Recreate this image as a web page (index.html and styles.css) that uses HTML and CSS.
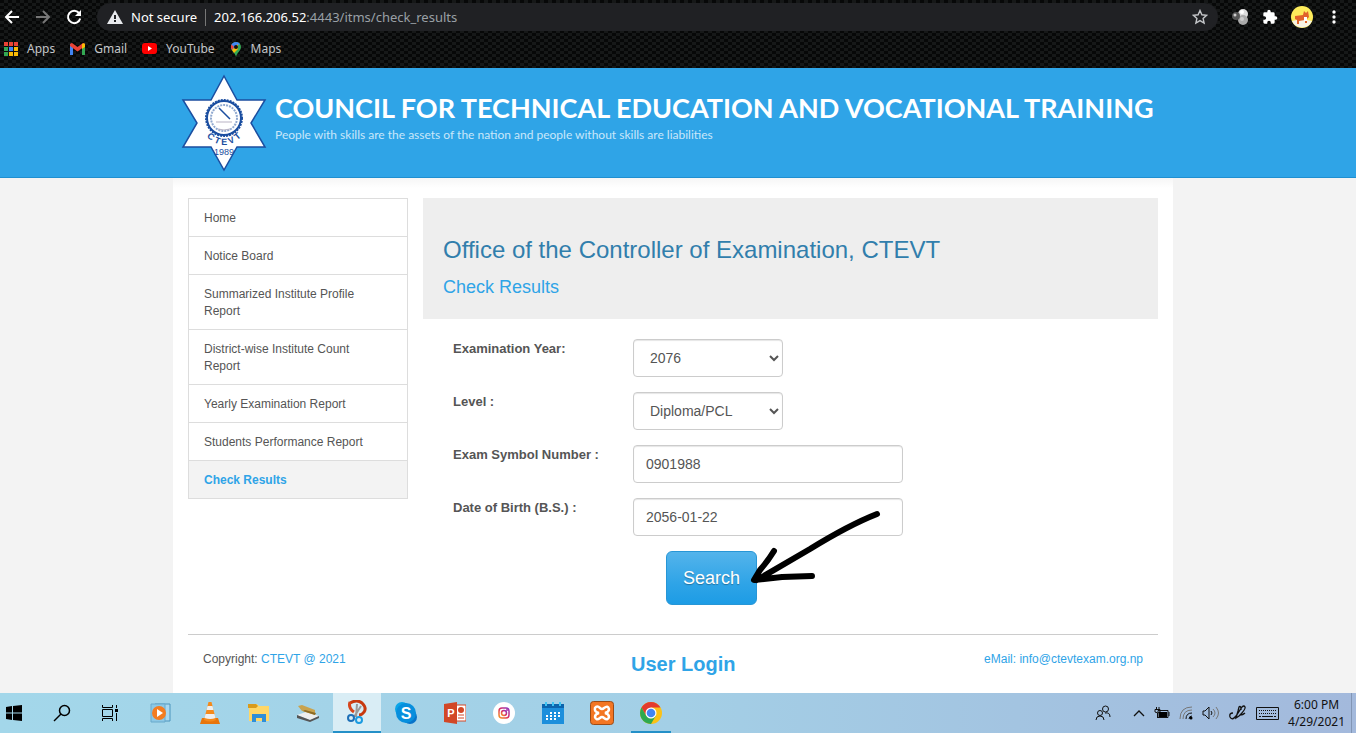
FILE: index.html
```
<!DOCTYPE html>
<html lang="en">
<head>
	<meta charset="utf-8">
	<title>CTEVT - Check Results</title>
	<link rel="stylesheet" href="styles.css">
</head>
<body>
	<!-- browser bar -->
	<div class="browser">
		<div class="toolbar">
			<button class="tool" aria-label="Back"><svg width="16" height="16" viewBox="0 0 16 16"><path d="M15 8H2M8 2L2 8l6 6" fill="none" stroke="#fff" stroke-width="2"/></svg></button>
			<button class="tool" aria-label="Forward"><svg width="16" height="16" viewBox="0 0 16 16"><path d="M1 8h13M8 2l6 6-6 6" fill="none" stroke="#777" stroke-width="2"/></svg></button>
			<button class="tool" aria-label="Reload"><svg width="16" height="16" viewBox="0 0 16 16"><path d="M13 4A6.200 6.200 0 1 0 14.200 9.500" fill="none" stroke="#fff" stroke-width="2"/><path d="M15 1v6H9z" fill="#fff"/></svg></button>
			<div class="address">
				<svg width="16" height="14" viewBox="0 0 16 14"><path d="M8 0l8 14H0z" fill="#e8eaed"/><path d="M8 5v4M8 10v2" stroke="#202124" stroke-width="2"/></svg>
				<span class="secure">Not secure</span>
				<span class="url">202.166.206.52<span class="path">:4443/itms/check_results</span></span>
				<svg class="star" width="16" height="16" viewBox="0 0 16 16"><path d="M8 1.500l1.900 4.300 4.700.5-3.500 3.100 1 4.600L8 11.600 3.900 14l1-4.600L1.400 6.300l4.700-.5z" fill="none" stroke="#c4c6c9" stroke-width="1.400"/></svg>
			</div>
			<svg width="18" height="18" viewBox="0 0 18 18"><circle cx="12" cy="6" r="5" fill="#ddd"/><circle cx="12" cy="12" r="5" fill="#aaa"/><circle cx="5" cy="8" r="4" fill="#555"/><circle cx="4" cy="7" r="1.500" fill="#ccc"/><circle cx="11" cy="11" r="2" fill="#ccc"/><circle cx="11" cy="4" r="2" fill="#fff"/></svg>
			<svg width="16" height="16" viewBox="0 0 24 24"><path d="M20.500 11H19V7a2 2 0 0 0-2-2h-4V3.500a2.500 2.500 0 0 0-5 0V5H4a2 2 0 0 0-2 2v3.800h1.500a2.700 2.700 0 0 1 0 5.400H2V20a2 2 0 0 0 2 2h3.800v-1.500a2.700 2.700 0 0 1 5.400 0V22H17a2 2 0 0 0 2-2v-4h1.500a2.500 2.500 0 0 0 0-5z" fill="#fff"/></svg>
			<svg width="22" height="22" viewBox="0 0 22 22"><circle cx="11" cy="11" r="11" fill="#fdec5b"/><path d="M1 15q10-3 20 0a11 11 0 0 1-20 0z" fill="#f7f3e4"/><path d="M4 10l8-1 1-4 2 2 2-2 1 6-2 2v4h-2v-3l-6 1v3H6v-4L4 13z" fill="#e0642a"/><path d="M13 11h3v4h-3z" fill="#fff"/></svg>
			<svg class="dots" width="4" height="14" viewBox="0 0 4 14"><circle cx="2" cy="2" r="1.700" fill="#fff"/><circle cx="2" cy="7" r="1.700" fill="#fff"/><circle cx="2" cy="12" r="1.700" fill="#fff"/></svg>
		</div>
		<div class="bookmarks">
			<a href="#"><svg width="14" height="14" viewBox="0 0 14 14"><path d="M0 0h4v4H0zM5 0h4v4H5zM10 0h4v4h-4z" fill="#ea4335"/><path d="M0 5h4v4H0zM0 10h4v4H0z" fill="#34a853"/><path d="M5 5h4v4H5z" fill="#4285f4"/><path d="M10 5h4v4h-4zM5 10h4v4H5zM10 10h4v4h-4z" fill="#fbbc05"/></svg>Apps</a>
			<a href="#"><svg width="15" height="12" viewBox="0 0 15 12"><path d="M0 1h3v11H0z" fill="#4285f4"/><path d="M12 1h3v11h-3z" fill="#34a853"/><path d="M0 2Q0 0 2 0l5.500 4L13 0q2 0 2 2v1L7.500 8.500 0 3z" fill="#ea4335"/><path d="M12 1q3-2 3 1v2l-3 2z" fill="#fbbc04"/></svg>Gmail</a>
			<a href="#"><svg width="15" height="11" viewBox="0 0 15 11"><rect width="15" height="11" rx="3" fill="#f00"/><path d="M6 3l4 2.500L6 8z" fill="#fff"/></svg>YouTube</a>
			<a href="#"><svg width="12" height="16" viewBox="0 0 12 16"><path d="M6 16C5 11 1 10 1 6a5 5 0 0 1 10 0c0 4-4 5-5 10z" fill="#34a853"/><path d="M1 6a5 5 0 0 1 9-3L2 9Q1 7 1 6z" fill="#4285f4"/><path d="M1.500 3.500L4 6 2 9Q0 6 1.500 3.500z" fill="#ea4335"/><path d="M2 9l6-6v5l-4 4z" fill="#fbbc04"/><circle cx="6" cy="6" r="2" fill="#111"/></svg>Maps</a>
		</div>
	</div>

	<header class="banner">
		<div class="container brand">
			<svg width="86" height="98" viewBox="0 0 86 98">
				<path d="M43 2l13 24h28L70 49l14 24H56L43 96 30 73H2l14-24L2 26h28z" fill="#fff" stroke="#1b4ea0" stroke-width="1.500"/>
				<circle cx="43" cy="44" r="17" fill="#fff" stroke="#1b4ea0" stroke-width="2"/>
				<circle cx="43" cy="44" r="18" fill="none" stroke="#1b4ea0" stroke-width="2" stroke-dasharray="2 1"/>
				<circle cx="43" cy="44" r="13" fill="none" stroke="#8fa8cf" stroke-width="2" stroke-dasharray="2 1"/>
				<path d="M38 34l11 11" stroke="#1b4ea0" stroke-width="1.500"/>
				<path d="M35 48h16M37 55q6 2 12 0" stroke="#b9b3c4" fill="none"/>
				<path id="arc" d="M23 60Q43 82 63 60" fill="none"/>
				<text class="logo-name"><textPath href="#arc" startOffset="50%" text-anchor="middle">C T E V T</textPath></text>
				<text class="logo-year" x="43" y="81" text-anchor="middle">1989</text>
			</svg>
			<div>
				<h1>COUNCIL FOR TECHNICAL EDUCATION AND VOCATIONAL TRAINING</h1>
				<p>People with skills are the assets of the nation and people without skills are liabilities</p>
			</div>
		</div>
	</header>

	<div class="page">
		<div class="container content">
			<div class="columns">
				<nav class="menu">
					<a href="#">Home</a>
					<a href="#">Notice Board</a>
					<a href="#">Summarized Institute Profile Report</a>
					<a href="#">District-wise Institute Count Report</a>
					<a href="#">Yearly Examination Report</a>
					<a href="#">Students Performance Report</a>
					<a href="#" class="active">Check Results</a>
				</nav>
				<main>
					<div class="heading">
						<h2>Office of the Controller of Examination, CTEVT</h2>
						<h3>Check Results</h3>
					</div>
					<form>
						<label for="year">Examination Year:</label>
						<select id="year"><option>2076</option></select>
						<label for="level">Level :</label>
						<select id="level"><option>Diploma/PCL</option></select>
						<label for="symbol">Exam Symbol Number :</label>
						<input type="text" id="symbol" value="0901988">
						<label for="dob">Date of Birth (B.S.) :</label>
						<input type="text" id="dob" value="2056-01-22">
						<div class="submit">
							<button type="submit">Search</button>
							<!-- hand drawn arrow -->
							<svg class="arrow" width="132" height="78" viewBox="0 0 132 78"><path d="M127 5Q99 16 60 40L7 71M24 42Q18 52 10 61L4 71L32 68L62 67" fill="none" stroke="#000" stroke-width="6" stroke-linecap="round" stroke-linejoin="round"/></svg>
						</div>
					</form>
				</main>
			</div>
			<footer>
				<span>Copyright: <a href="#">CTEVT @ 2021</a></span>
				<a href="#" class="login">User Login</a>
				<a href="#">eMail: info@ctevtexam.org.np</a>
			</footer>
		</div>
	</div>

	<!-- windows taskbar -->
	<div class="taskbar">
		<button class="start" aria-label="Start"><svg width="16" height="16" viewBox="0 0 16 16"><path d="M0 2l6-1v6.500H0zM7 1l9-1v7.500H7zM0 8.500h6V15l-6-1zM7 8.500h9V16l-9-1z"/></svg></button>
		<button aria-label="Search"><svg width="18" height="18" viewBox="0 0 18 18"><circle cx="11.500" cy="6.500" r="5" fill="none" stroke="#000" stroke-width="1.500"/><path d="M8 10l-7 7" stroke="#000" stroke-width="1.500"/></svg></button>
		<button aria-label="Task View"><svg width="18" height="16" viewBox="0 0 18 16"><path d="M1.500 4.500h10v7h-10zM1.500 0v2.500h10V0M1.500 16v-2.500h10V16M15.500 0v3M15.500 8v8" fill="none" stroke="#000"/><path d="M14 4h3v3h-3z"/></svg></button>
		<div class="apps">
			<button aria-label="Media Player"><svg width="22" height="20" viewBox="0 0 22 20"><path d="M5 1h15v17H5z" fill="#a9d8f0" stroke="#4d95bd"/><path d="M1 1h14v18H1z" fill="#8cc8e6" stroke="#68a9cb"/><circle cx="9" cy="10" r="7" fill="#f47c20"/><path d="M7 6l6 4-6 4z" fill="#fff"/></svg></button>
			<button aria-label="VLC"><svg width="20" height="22" viewBox="0 0 20 22"><path d="M2 16h16l2 6H0z" fill="#e8750a"/><path d="M8.500 0h3L16 18q-6 3-12 0z" fill="#f58a1a"/><path d="M7.500 4h5l1 4h-7zM5.500 12h9l1 4q-5 2-11 0z" fill="#eee"/></svg></button>
			<button aria-label="Explorer"><svg width="22" height="18" viewBox="0 0 22 18"><path d="M1 0h8l2 2h10v15H1z" fill="#ffd767"/><path d="M0 0h8l2 2-2 2H0z" fill="#d99b1c"/><path d="M4 18v-8h14v8h-4v-4H8v4z" fill="#2f8fd8"/></svg></button>
			<button aria-label="Scanner"><svg width="22" height="18" viewBox="0 0 22 18"><path d="M0 11l9-3 13 4-9 4z" fill="#eee"/><path d="M0 11l13 5v2L0 14zM13 16l9-4v2l-9 4z" fill="#555"/><path d="M1 2l4-1 13 5v5L5 7z" fill="#c9a34e"/><path d="M6 7l12 4 1-2L8 6z" fill="#8d6b25"/></svg></button>
			<button class="current" aria-label="Snipping Tool"><svg width="20" height="24" viewBox="0 0 20 24"><path d="M3 3Q10-1 15 3q5 5 2 9-2 3-5 3" fill="none" stroke="#c8390f" stroke-width="3"/><path d="M3 2q-2 6 4 10" fill="none" stroke="#d7451b" stroke-width="3"/><path d="M10 4L9 17M14 6L7 17" stroke="#999" stroke-width="2"/><circle cx="4" cy="18" r="3" fill="none" stroke="#1d70b8" stroke-width="2"/><circle cx="12" cy="20" r="3" fill="none" stroke="#1b9be0" stroke-width="2"/></svg></button>
			<button aria-label="Skype"><svg width="22" height="22" viewBox="0 0 22 22"><circle cx="7" cy="7" r="7" fill="#0aa5e8"/><circle cx="15" cy="15" r="7" fill="#0873c9"/><circle cx="11" cy="11" r="10" fill="#078fdd"/><text class="skype" x="11" y="17" text-anchor="middle">S</text></svg></button>
			<button aria-label="PowerPoint"><svg width="22" height="22" viewBox="0 0 22 22"><path d="M12 3h10v16H12z" fill="#fff" stroke="#d24726"/><path d="M14 13h6M14 16h6" stroke="#d24726"/><circle cx="17" cy="8" r="3" fill="#d24726"/><path d="M0 2l13-2v22L0 20z" fill="#d24726"/><text class="ppt" x="7" y="15" text-anchor="middle">P</text></svg></button>
			<button aria-label="Instagram"><svg width="22" height="22" viewBox="0 0 22 22"><defs><linearGradient id="insta" x1="0" y1="1" x2="1" y2="0"><stop offset="0" stop-color="#f59b20"/><stop offset=".5" stop-color="#dc2c63"/><stop offset="1" stop-color="#8838c8"/></linearGradient></defs><circle cx="11" cy="11" r="11" fill="#fff"/><rect x="6" y="6" width="10" height="10" rx="3" fill="none" stroke="url(#insta)" stroke-width="1.500"/><circle cx="11" cy="11" r="2.500" fill="none" stroke="url(#insta)" stroke-width="1.500"/><circle cx="14" cy="8" r="1" fill="#a833a5"/></svg></button>
			<button aria-label="Calendar"><svg width="22" height="22" viewBox="0 0 22 22"><path d="M0 2h22v20H0z" fill="#1c8fdc"/><path d="M0 2h22v4H0z" fill="#0c65ad"/><path d="M4 0v4M11 0v4M18 0v4" stroke="#3fc4f2" stroke-width="2"/><path d="M8 11h11M4 14h15M4 17h11" stroke="#fff" stroke-width="2" stroke-dasharray="2 2"/></svg></button>
			<button aria-label="XAMPP"><svg width="24" height="24" viewBox="0 0 24 24"><rect x=".5" y=".5" width="23" height="23" rx="3" fill="#f37623" stroke="#9b4b16"/><path d="M9 12q-5-1-4-5 2-3 5 0 2 2 4 0 4-3 5 1 0 3-4 4 4 1 4 4-1 4-5 1-2-2-4 0-4 3-5-1 0-3 4-4z" fill="none" stroke="#fff" stroke-width="2.500"/></svg></button>
			<button class="running" aria-label="Chrome"><svg width="22" height="22" viewBox="0 0 22 22"><circle cx="11" cy="11" r="11" fill="#fbc116"/><path d="M1.500 5.500a11 11 0 0 1 19 0H11L6.200 13.800z" fill="#e33b2e"/><path d="M1.500 5.500L6.200 13.800 11 16.500 15.800 13.800 11 22A11 11 0 0 1 1.500 5.500z" fill="#2da94f"/><circle cx="11" cy="11" r="5.500" fill="#fff"/><circle cx="11" cy="11" r="4.300" fill="#4285f4"/></svg></button>
		</div>
		<div class="tray">
			<svg class="people" width="16" height="16" viewBox="0 0 16 16"><circle cx="10.500" cy="4" r="3" fill="none" stroke="#111"/><circle cx="5" cy="8" r="2.500" fill="none" stroke="#111"/><path d="M1 15q0-4 4-4t4 4M10 8q5-1 5 4" fill="none" stroke="#111"/></svg>
			<svg width="12" height="7" viewBox="0 0 12 7"><path d="M1 6l5-5 5 5" fill="none" stroke="#111" stroke-width="1.300"/></svg>
			<svg width="16" height="12" viewBox="0 0 16 12"><path d="M4 3.500h10v7H4zM15 5v4M1 2.500h5V5q-2 2-5 0zM2.500 0v2M5 0v2M3.500 6v5" fill="none" stroke="#111"/><path d="M5 5h8v5H5z"/></svg>
			<svg width="14" height="14" viewBox="0 0 14 14"><path d="M1 13Q1 1 13 1M4 13q0-9 9-9" fill="none" stroke="#777"/><path d="M7 13q0-6 6-6M10 13q0-3 3-3" fill="none" stroke="#111"/><circle cx="12" cy="12" r="1.500"/></svg>
			<svg width="18" height="14" viewBox="0 0 18 14"><path d="M1 5h2l4-4v12L3 9H1z" fill="none" stroke="#111"/><path d="M9 5q2 2 0 4" fill="none" stroke="#111"/><path d="M11 3q4 4 0 8M14 1q5 6 0 12" fill="none" stroke="#777"/></svg>
			<svg width="18" height="16" viewBox="0 0 18 16"><path d="M4 8q-4 0-3 4 2 4 6-1l6-9q2-2 3 0t-6 9l-3 2 2-7 1-4q2-2 2 3M11 10q3 0 5-2" fill="none" stroke="#111" stroke-width="1.300"/></svg>
			<svg width="23" height="13" viewBox="0 0 23 13"><path d="M.5.500h22v12H.5z" fill="none" stroke="#111"/><path d="M3 3.500h17M3 6.500h17" stroke="#111" stroke-dasharray="1 1"/><path d="M3 9.500h2M6 9.500h11M18 9.500h2" stroke="#111"/></svg>
			<div class="clock">6:00 PM<br>4/29/2021</div>
		</div>
	</div>
</body>
</html>
```
FILE: styles.css
```
* {
  box-sizing: border-box;
}

body {
  display: flex;
  flex-direction: column;
  min-height: 100vh;
  margin: 0;
  background-color: #f3f3f3;
  color: #555;
  font-family: "Liberation Sans", Arial, sans-serif;
  font-size: 12px;
  line-height: 17px;
}

a {
  color: #2fa4e7;
  text-decoration: none;
}

button {
  padding: 0;
  border: none;
  background: none;
}

svg {
  display: block;
  flex-shrink: 0;
}

/* Browser bar */
.browser {
  height: 68px;
  padding-top: 3px;
  background-color: #0b0c0c;
  background-image: conic-gradient(#161818 25%, #070808 0 50%, #161818 0 75%, #070808 0);
  background-size: 8px 6px;
  font-family: "Noto Sans", sans-serif;
}

.toolbar {
  display: flex;
  align-items: center;
  gap: 13px;
  padding: 0 20px 0 4px;
}

.tool {
  width: 18px;
}

.dots {
  margin-left: 6px;
}

.address {
  display: flex;
  flex: 1;
  align-items: center;
  height: 28px;
  padding: 0 10px;
  border-radius: 14px;
  background-color: #202124;
  color: #fff;
  font-size: 13px;
}

.secure {
  margin: 0 8px;
  padding-right: 8px;
  border-right: 1px solid #777;
}

.path {
  color: #9aa0a6;
}

.star {
  margin-left: auto;
}

.bookmarks {
  display: flex;
  gap: 15px;
  padding: 9px 4px;
}

.bookmarks a {
  display: flex;
  align-items: center;
  gap: 9px;
  color: #c4c6c9;
}

/* Site header */
.banner {
  height: 110px;
  padding-right: 10px;
  background-color: #2fa4e7;
  border-bottom: 1px solid #1f8fd0;
}

.container {
  max-width: 1000px;
  margin: 0 auto;
}

.brand {
  display: flex;
  gap: 8px;
  padding: 6px 8px;
  color: #fff;
  font-family: Lato, sans-serif;
  white-space: nowrap;
}

.brand h1 {
  margin: 16px 0 0;
  font-size: 27px;
  line-height: 36px;
}

.brand p {
  margin: 0;
  color: #c9e7fa;
}

.logo-name {
  fill: #1b4ea0;
  font: bold 9px "Liberation Sans", sans-serif;
}

.logo-year {
  fill: #1b4ea0;
  font: 9px "Liberation Sans", sans-serif;
}

/* Page content */
.page {
  display: flex;
  flex: 1;
  padding-right: 10px;
}

.content {
  flex: 1;
  padding: 20px 15px 0;
  background: linear-gradient(#f6f6f6, #fff 10px);
}

.columns {
  display: flex;
  align-items: flex-start;
  gap: 15px;
}

.menu {
  width: 220px;
  border: 1px solid #ddd;
}

.menu a {
  display: block;
  padding: 11px 30px 9px 15px;
  color: #555;
}

.menu a + a {
  border-top: 1px solid #ddd;
}

.menu .active {
  background-color: #f3f3f3;
  color: #2fa4e7;
  font-weight: bold;
}

main {
  flex: 1;
}

.heading {
  height: 121px;
  padding: 36px 20px 0;
  background-color: #eee;
}

.heading h2 {
  margin: 0 0 10px;
  color: #317eac;
  font-size: 24px;
  font-weight: normal;
  line-height: 32px;
}

.heading h3 {
  margin: 0;
  color: #2fa4e7;
  font-size: 18px;
  font-weight: normal;
  line-height: 22px;
}

/* Search form */
form {
  display: grid;
  grid-template-columns: 180px 270px;
  row-gap: 15px;
  padding: 20px 30px 29px;
}

label {
  font-size: 13px;
  font-weight: bold;
  line-height: 20px;
}

input,
select {
  height: 38px;
  padding: 0 12px;
  border: 1px solid #ccc;
  border-radius: 4px;
  background-color: #fff;
  box-shadow: inset 0 1px 1px rgba(0, 0, 0, 0.1);
  color: #555;
  font-family: inherit;
  font-size: 14px;
}

select {
  width: 150px;
  padding: 0 0 0 12px;
}

.submit {
  position: relative;
  grid-column: 2;
  width: 91px;
  margin-left: 33px;
}

.submit button {
  width: 91px;
  height: 54px;
  border: 1px solid #2796d6;
  border-radius: 6px;
  background: linear-gradient(#54b4eb, #2fa4e7 60%, #1d9ce5);
  color: #fff;
  font-family: inherit;
  font-size: 18px;
  text-shadow: 0 1px 1px rgba(0, 0, 0, 0.3);
}

.arrow {
  position: absolute;
  top: -42px;
  left: 84px;
}

/* Footer */
footer {
  display: grid;
  grid-template-columns: 428px 1fr auto;
  padding: 16px 15px 14px;
  border-top: 1px solid #ccc;
}

.login {
  font-size: 20px;
  font-weight: bold;
  line-height: 26px;
}

/* Taskbar */
.taskbar {
  display: flex;
  height: 40px;
  background: linear-gradient(to right, #a3d7ea, #a3cfe6 50%, #a3b9dc);
}

.taskbar button {
  display: flex;
  align-items: center;
  justify-content: center;
  width: 48px;
}

.taskbar .start {
  width: 38px;
  padding-right: 10px;
}

.apps {
  display: flex;
  gap: 1px;
  margin-left: 3px;
}

.apps .current {
  background-color: #d9edf5;
  border-bottom: 2px solid #2490c8;
}

.apps .running {
  background: linear-gradient(#2490c8, #2490c8) center bottom / 40px 2px no-repeat;
}

.tray {
  display: flex;
  align-items: center;
  gap: 9px;
  margin-left: auto;
  padding-right: 6px;
  border-right: 1px solid #8296b5;
  margin-right: 4px;
}

.people {
  margin-right: 13px;
}

.clock {
  color: #111;
  font-family: "Noto Sans", sans-serif;
  text-align: center;
}

.skype {
  fill: #fff;
  font: bold 16px "Liberation Sans", sans-serif;
}

.ppt {
  fill: #fff;
  font: bold 11px "Liberation Sans", sans-serif;
}
```
